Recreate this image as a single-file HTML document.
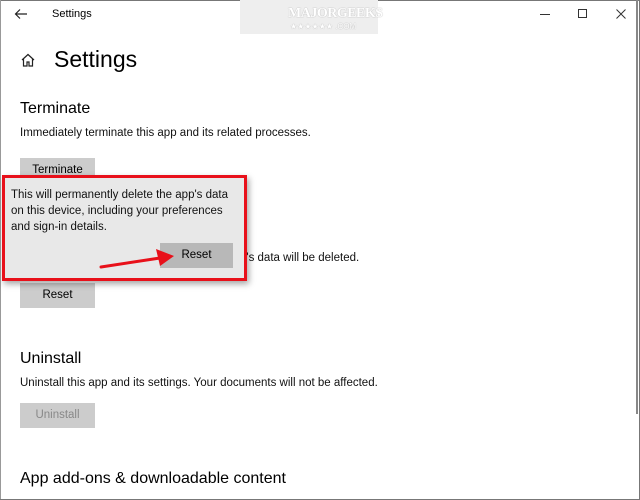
<!DOCTYPE html>
<html><head><meta charset="utf-8"><style>
*{margin:0;padding:0;box-sizing:border-box}
body{width:640px;height:500px;overflow:hidden;background:#fff;font-family:"Liberation Sans",sans-serif;color:#000;position:relative}
.a{position:absolute}
.h{font-size:16px;color:#000}
.p{font-size:11.5px;color:#111}
.btn{background:#ccc;font-size:11.5px;text-align:center;color:#000}
</style></head><body>
<div class="a" style="left:0;top:0;width:640px;height:1px;background:#777"></div>
<div class="a" style="left:0;top:0;width:1px;height:500px;background:#999"></div>
<div class="a" style="left:639px;top:0;width:1px;height:500px;background:#777"></div>
<div class="a" style="left:0;top:499px;width:640px;height:1px;background:#777"></div>
<div class="a" style="left:636px;top:0;width:2px;height:414px;background:#888"></div>
<svg class="a" style="left:14px;top:8px" width="14" height="12"><path d="M13 6H2M6 1.5L1.5 6 6 10.5" stroke="#222" stroke-width="1.2" fill="none"/></svg>
<div class="a" style="left:52px;top:8px;font-size:11px">Settings</div>
<div class="a" style="left:240px;top:0;width:138px;height:34px;background:#eee"></div>
<div class="a" style="left:288px;top:6px;font-size:14px;font-weight:bold;color:#fff;font-family:'Liberation Serif',serif;letter-spacing:-0.5px;text-shadow:0 0 1px #999">MAJORGEEKS</div>
<div class="a" style="left:290px;top:22px;font-size:8px;color:#fff;text-shadow:0 0 1px #999">★★★★★★ .COM</div>
<div class="a" style="left:540px;top:14px;width:10px;height:1px;background:#333"></div>
<div class="a" style="left:578px;top:9px;width:9px;height:9px;border:1px solid #333"></div>
<svg class="a" style="left:616px;top:9px" width="10" height="10"><path d="M0.5 0.5L9.5 9.5M9.5 0.5L0.5 9.5" stroke="#333" stroke-width="1"/></svg>
<svg class="a" style="left:20px;top:52px" width="16" height="16"><path d="M2 8L8 2.5 14 8M3.5 7V14H7V10H9V14H12.5V7" stroke="#222" stroke-width="1.2" fill="none"/></svg>
<div class="a" style="left:54px;top:46px;font-size:23px">Settings</div>
<div class="a h" style="left:20px;top:100px">Terminate</div>
<div class="a p" style="left:20px;top:127px">Immediately terminate this app and its related processes.</div>
<div class="a btn" style="left:20px;top:158px;width:75px;height:25px;line-height:25px">Terminate</div>
<div class="a p" style="left:240px;top:252px">p's data will be deleted.</div>
<div class="a btn" style="left:20px;top:283px;width:75px;height:25px;line-height:25px">Reset</div>
<div class="a h" style="left:20px;top:350px">Uninstall</div>
<div class="a p" style="left:20px;top:377px">Uninstall this app and its settings. Your documents will not be affected.</div>
<div class="a btn" style="left:20px;top:403px;width:75px;height:25px;line-height:25px;background:#ccc;color:#888">Uninstall</div>
<div class="a h" style="left:20px;top:470px">App add-ons &amp; downloadable content</div>
<div class="a" style="left:2px;top:175px;width:245px;height:106px;background:#e8e8e8;border:3px solid #e8101a;box-shadow:2px 3px 6px rgba(0,0,0,0.35)"></div>
<div class="a" style="left:11px;top:187px;font-size:11.5px;line-height:16px;color:#111">This will permanently delete the app's data<br>on this device, including your preferences<br>and sign-in details.</div>
<div class="a" style="left:160px;top:243px;width:73px;height:25px;line-height:25px;background:#b8b8b8;font-size:11.5px;text-align:center">Reset</div>
<svg class="a" style="left:98px;top:246px" width="80" height="24"><path d="M3 21L62 12" stroke="#e8101a" stroke-width="3" stroke-linecap="round"/><path d="M76 10L58 3L62 20Z" fill="#e8101a"/></svg>
</body></html>
